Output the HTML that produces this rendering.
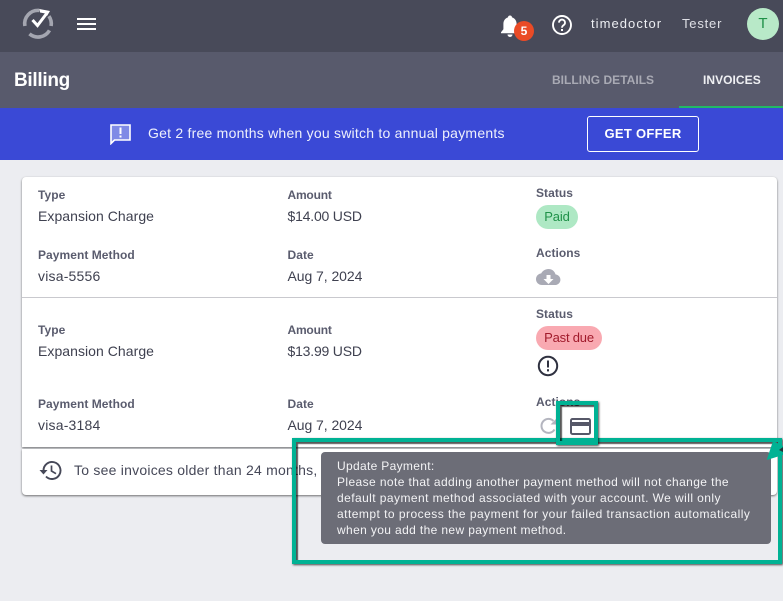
<!DOCTYPE html>
<html lang="en">
<head>
<meta charset="utf-8">
<title>Billing</title>
<style>
html,body{margin:0;padding:0;background:#ecedf1;}
body{width:783px;height:601px;position:relative;overflow:hidden;font-family:"Liberation Sans",sans-serif;color:#3f4150;}
.a{position:absolute;white-space:nowrap;}
.top{position:absolute;left:0;top:0;width:783px;height:52px;background:#484a59;}
.sub{position:absolute;left:0;top:52px;width:783px;height:56px;background:#585a6c;}
.banner{position:absolute;left:0;top:108px;width:783px;height:52px;background:#3a49d6;}
.card{position:absolute;left:22px;top:177px;width:755px;height:270px;background:#fff;border-radius:4px 4px 0 0;box-shadow:0 1px 2px rgba(0,0,0,.55);}
.card2{position:absolute;left:22px;top:449px;width:755px;height:46px;background:#fff;border-radius:0 0 4px 4px;box-shadow:0 1px 2px rgba(0,0,0,.55);}
.divider{position:absolute;left:22px;top:297px;width:755px;height:1px;background:#c9c9ce;}
.l{font-size:12px;font-weight:bold;color:#5a5c6e;line-height:14px;letter-spacing:.05px;}
.v{font-size:14px;color:#3f4150;line-height:16px;letter-spacing:.05px;}
.pill{border-radius:12px;height:24px;line-height:24px;font-size:13px;text-align:center;}
.tl{display:block;}
</style>
</head>
<body>
<div class="top"></div>
<div class="sub"></div>
<div class="banner"></div>

<svg class="a" style="left:20px;top:6px" width="36" height="36" viewBox="0 0 36 36">
  <g fill="none" stroke="#a4a6b0" stroke-width="3.6">
    <path d="M4.900 20A13.300 13.300 0 0 1 19.200 4.450"/>
    <path d="M28.900 10.100A13.300 13.300 0 0 1 31.100 20"/>
    <path d="M29.500 24.350A13.300 13.300 0 0 1 9.450 27.900"/>
  </g>
  <path d="M12.500 14L17.500 19.500L27 7" fill="none" stroke="#484a59" stroke-width="5.500"/>
  <path d="M12.500 14L17.500 19.500L27 7" fill="none" stroke="#fff" stroke-width="3"/>
  <path d="M19.300 3L30 5L27 10L25.500 7.500L20 6.500z" fill="#fff"/>
</svg>

<div class="a" style="left:77px;top:18.400px;width:19px;height:1.800px;background:#fff"></div>
<div class="a" style="left:77px;top:23.400px;width:19px;height:1.800px;background:#fff"></div>
<div class="a" style="left:77px;top:28.400px;width:19px;height:1.800px;background:#fff"></div>

<svg class="a" style="left:500px;top:15px" width="20" height="23" viewBox="0 0 20 23">
  <path d="M10 0.500c1.200 0 2 .8 2 1.900 3 .9 4.600 3.500 4.600 6.600v5.200l2.400 3v1H1v-1l2.400-3V9c0-3.100 1.600-5.700 4.600-6.600C8 1.300 8.800.5 10 .5z" fill="#fff"/>
  <path d="M7.500 19.500h5a2.500 2.500 0 0 1-5 0z" fill="#fff"/>
</svg>
<div class="a" style="left:514px;top:21px;width:20px;height:20px;border-radius:50%;background:#ea4b26;color:#fff;font-size:12px;font-weight:bold;line-height:20px;text-align:center">5</div>

<svg class="a" style="left:551px;top:14px" width="22" height="22" viewBox="0 0 22 22">
  <circle cx="11" cy="11" r="9" fill="none" stroke="#fff" stroke-width="1.900"/>
  <path d="M8 8.600a3 3 0 1 1 4.800 2.400c-1.100.8-1.800 1.300-1.800 2.700" fill="none" stroke="#fff" stroke-width="1.800"/>
  <rect x="10" y="15" width="2" height="2" fill="#fff"/>
</svg>

<div class="a" style="left:591px;top:16px;font-size:13px;line-height:16px;color:#eceef2;letter-spacing:1.050px">timedoctor</div>
<div class="a" style="left:682px;top:16px;font-size:13px;line-height:16px;color:#dfe0e6;letter-spacing:.8px">Tester</div>
<div class="a" style="left:747px;top:8px;width:32px;height:32px;border-radius:50%;background:#b8e9c8;color:#1f9148;font-size:15px;line-height:32px;text-align:center">T</div>

<div class="a" style="left:14px;top:69px;font-size:19px;font-weight:bold;line-height:24px;color:#fff;letter-spacing:-.3px">Billing</div>
<div class="a" style="left:552px;top:73px;font-size:12px;font-weight:bold;line-height:14px;color:#a9aab4;letter-spacing:.02px">BILLING DETAILS</div>
<div class="a" style="left:703px;top:73px;font-size:12px;font-weight:bold;line-height:14px;color:#eff0f3;letter-spacing:.05px">INVOICES</div>
<div class="a" style="left:679px;top:106px;width:104px;height:2px;background:#22b866"></div>

<svg class="a" style="left:110px;top:124px" width="21" height="21" viewBox="0 0 21 21">
  <path d="M1 1h19v15H4.500L1 19.500z" fill="#7f8ae6" stroke="#fff" stroke-width="1.600" stroke-linejoin="miter"/>
  <rect x="9.500" y="3.500" width="2" height="6.500" fill="#fff"/>
  <rect x="9.500" y="11.500" width="2" height="2" fill="#fff"/>
</svg>
<div class="a" style="left:148px;top:125px;font-size:14px;line-height:17px;color:#eef0fc;letter-spacing:.23px">Get 2 free months when you switch to annual payments</div>
<div class="a" style="left:587px;top:116px;width:110px;height:34px;border:1px solid #fff;border-radius:3px;color:#fff;font-size:13px;font-weight:bold;line-height:34px;text-align:center;letter-spacing:.3px">GET OFFER</div>

<div class="card"></div>
<div class="divider"></div>
<div class="card2"></div>

<div class="a l" style="left:38px;top:188px">Type</div>
<div class="a v" style="left:38px;top:208px">Expansion Charge</div>
<div class="a l" style="left:287.500px;top:188px;letter-spacing:-.2px">Amount</div>
<div class="a v" style="left:287.500px;top:208px;letter-spacing:-.2px">$14.00 USD</div>
<div class="a l" style="left:38px;top:248px">Payment Method</div>
<div class="a v" style="left:38px;top:268px;letter-spacing:.2px">visa-5556</div>
<div class="a l" style="left:287.500px;top:248px">Date</div>
<div class="a v" style="left:287.500px;top:268px;letter-spacing:-.06px">Aug 7, 2024</div>
<div class="a l" style="left:536px;top:186px">Status</div>
<div class="a pill" style="left:536px;top:205px;width:42px;background:#aee8c4;color:#1f9148;letter-spacing:-.1px">Paid</div>
<div class="a l" style="left:536px;top:246px">Actions</div>
<svg class="a" style="left:536px;top:268px" width="25" height="20" viewBox="0 0 25 20">
  <path d="M12.500 1c3.500 0 6.300 2.300 7 5.400 2.800.3 4.900 2.600 4.900 5.300 0 3-2.400 5.300-5.400 5.300H6c-3.300 0-6-2.600-6-5.800 0-3 2.200-5.400 5.200-5.800C6.500 2.800 9.300 1 12.500 1z" fill="#a9aab5"/>
  <path d="M10.500 7h4v4h3l-5 5-5-5h3z" fill="#fff"/>
</svg>

<div class="a l" style="left:38px;top:323px">Type</div>
<div class="a v" style="left:38px;top:343px">Expansion Charge</div>
<div class="a l" style="left:287.500px;top:323px;letter-spacing:-.2px">Amount</div>
<div class="a v" style="left:287.500px;top:343px;letter-spacing:-.2px">$13.99 USD</div>
<div class="a l" style="left:38px;top:397px">Payment Method</div>
<div class="a v" style="left:38px;top:417px;letter-spacing:.2px">visa-3184</div>
<div class="a l" style="left:287.500px;top:397px">Date</div>
<div class="a v" style="left:287.500px;top:417px;letter-spacing:-.06px">Aug 7, 2024</div>
<div class="a l" style="left:536px;top:307px">Status</div>
<div class="a pill" style="left:536px;top:326px;width:66px;background:#f9a9b1;color:#a11a2b;letter-spacing:-.2px">Past due</div>
<svg class="a" style="left:537px;top:355px" width="22" height="22" viewBox="0 0 22 22">
  <circle cx="11" cy="11" r="9.200" fill="none" stroke="#2f3140" stroke-width="2"/>
  <rect x="10" y="5.500" width="2" height="7" fill="#2f3140"/>
  <rect x="10" y="14.200" width="2" height="2.200" fill="#2f3140"/>
</svg>
<div class="a l" style="left:536px;top:395px">Actions</div>
<svg class="a" style="left:539px;top:417px" width="20" height="18" viewBox="0 0 20 18">
  <path d="M15.500 12.500A7 7 0 1 1 14.500 4" fill="none" stroke="#b4b5bf" stroke-width="2"/>
  <path d="M11.500 7.500h6.500V1z" fill="#b4b5bf"/>
</svg>
<svg class="a" style="left:570px;top:418px" width="21" height="17" viewBox="0 0 21 17">
  <rect x="1" y="1" width="19" height="15" rx="1.500" fill="#fff" stroke="#565868" stroke-width="2"/>
  <rect x="1" y="4" width="19" height="4" fill="#565868"/>
</svg>

<svg class="a" style="left:39px;top:460px" width="23" height="21" viewBox="0 0 23 21">
  <path d="M4.500 10.500A8.500 8.500 0 1 1 7 16.500" fill="none" stroke="#464858" stroke-width="1.900"/>
  <path d="M0.500 10h8l-4 4.500z" fill="#464858"/>
  <path d="M12.500 5.500v5.500l4.500 2.700" fill="none" stroke="#464858" stroke-width="1.700"/>
</svg>
<div class="a" style="left:74px;top:462px;font-size:14px;line-height:17px;color:#464858;letter-spacing:.23px">To see invoices older than 24 months,</div>

<div class="a" style="left:321px;top:452px;width:450px;height:92px;background:#6c6d77;border-radius:4px"></div>
<div class="a" style="left:337px;top:458px;font-size:12px;line-height:16px;color:#f3f3f5;letter-spacing:.37px">
  <span class="tl" style="letter-spacing:.32px">Update Payment:</span>
  <span class="tl" style="letter-spacing:.4px">Please note that adding another payment method will not change the</span>
  <span class="tl" style="letter-spacing:.43px">default payment method associated with your account. We will only</span>
  <span class="tl" style="letter-spacing:.47px">attempt to process the payment for your failed transaction automatically</span>
  <span class="tl" style="letter-spacing:.37px">when you add the new payment method.</span>
</div>

<div class="a" style="left:292px;top:438px;width:482px;height:118px;border:4px solid #00b294;box-shadow:1px 1px 2px rgba(0,0,0,.7),inset 2px 2px 1px rgba(0,0,0,.65);"></div>
<div class="a" style="left:556px;top:401px;width:34px;height:36px;border:4px solid #00b294;box-shadow:1px 1px 2px rgba(0,0,0,.7),inset 2px 2px 1px rgba(0,0,0,.65);"></div>
<svg class="a" style="left:762px;top:438px" width="21" height="24" viewBox="0 0 21 24">
  <path d="M4.700 22L11 3L21 8V17z" fill="#00b294"/>
  <path d="M17 12L21 9V14z" fill="#26323a"/>
</svg>
</body>
</html>
